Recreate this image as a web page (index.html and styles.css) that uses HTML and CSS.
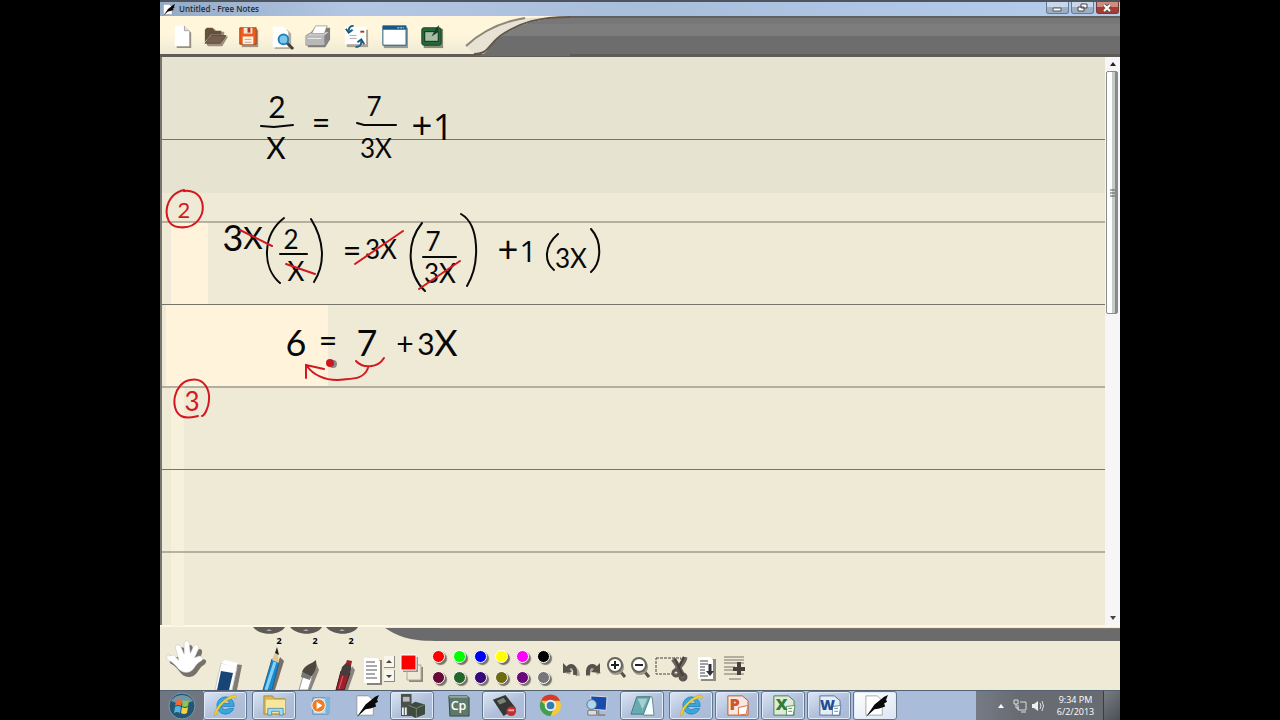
FILE: index.html
```
<!DOCTYPE html>
<html lang="en">
<head>
<meta charset="utf-8">
<title>Untitled - Free Notes</title>
<link rel="stylesheet" href="styles.css">
</head>
<body>
<svg class="defs" width="0" height="0" aria-hidden="true">
  <defs>
    <symbol id="quill" viewBox="0 0 26 26"><path d="M3 3h12l5 5v15H3z" fill="#fff" stroke="#777" stroke-width=".6"/><path d="M3 25L12 12 22 4 26 2 24 7 25 9 22 11 23 14 17 16 12 17z" fill="#090909"/></symbol>
    <symbol id="ie" viewBox="0 0 26 26"><path d="M13 4a9 9 0 1 0 8.500 12h-5.500a4 4 0 0 1-7-2h13A9 9 0 0 0 13 4zM9 11a4 4 0 0 1 8 0z" fill="#35a9df" fill-rule="evenodd" stroke="#1875b7" stroke-width=".7"/><path d="M2 24C-1 19 11 4 22 2c4 0 2 4 1 5 0-2-1-3-4-1C10 9 5 17 4 22z" fill="#f2cf35" stroke="#a9912b" stroke-width=".4"/></symbol>
    <linearGradient id="steel" gradientUnits="userSpaceOnUse" x1="0" y1="16" x2="0" y2="56"><stop offset=".2" stop-color="#777"/><stop offset=".2" stop-color="#7d7d7d"/><stop offset=".5" stop-color="#7d7d7d"/><stop offset=".5" stop-color="#6d6d6d"/></linearGradient>
  </defs>
</svg>
<div class="window">
  <header class="titlebar">
    <svg class="app-icon" viewBox="0 0 26 26" aria-hidden="true"><use href="#quill"/></svg>
    <h1 class="title">Untitled - Free Notes</h1>
    <div class="controls">
      <button class="control" aria-label="Minimize"><svg width="20" height="12"><path d="M6 6h8v3H6z" fill="#fff" stroke="#555"/></svg></button>
      <button class="control" aria-label="Restore"><svg width="20" height="12"><path d="M9 2h6v4H9zM6 5h6v4H6z" fill="#fff" stroke="#444"/></svg></button>
      <button class="control control-close" aria-label="Close"><svg width="20" height="12"><path d="M7 3l6 6M13 3l-6 6" stroke="#654" stroke-width="4"/><path d="M7 3l6 6M13 3l-6 6" stroke="#fff" stroke-width="2"/></svg></button>
    </div>
  </header>

  <nav class="toolbar" aria-label="File">
    <div class="file-tools">
      <button class="file-tool" aria-label="New"><svg viewBox="0 0 30 30"><path d="M9 6h10l5 5v16H9z" fill="#968f82"/><path d="M7 4h10l5 5v16H7z" fill="#fff"/><path d="M17 4v5h5" fill="#ddd" stroke="#888" stroke-width=".7"/></svg></button>
      <button class="file-tool" aria-label="Open"><svg viewBox="0 0 30 30"><path d="M6 24V9l2-2h6l2 3h8v5h4l-6 10H8z" fill="#9e8f7c"/><path d="M4 21V8l2-2h6l2 3h7v4H10z" fill="#65503e"/><path d="M4 22l7-8h15l-6 8z" fill="#756050" stroke="#4e3b2e" stroke-width=".7"/></svg></button>
      <button class="file-tool" aria-label="Save"><svg viewBox="0 0 30 30"><path d="M8 8h17v18H8z" fill="#a29180"/><path d="M6 6h17v17H6z" fill="#ee5c19" stroke="#9c461b"/><path d="M10 6h9v6h-9z" fill="#f5e7dc"/><path d="M14 6h3v5h-3z" fill="#aa3b13"/><path d="M9 15h11v8H9z" fill="#fff2e1"/><path d="M11 18h7M11 21h7" stroke="#c4a389"/></svg></button>
      <button class="file-tool" aria-label="Print preview"><svg viewBox="0 0 30 30"><path d="M8 8h13l4 4v16H8z" fill="#b5ad9d"/><path d="M6 5h11l5 5v16H6z" fill="#fff"/><circle cx="17" cy="18" r="5" fill="#79c9ef" stroke="#267fb1" stroke-width="2"/><path d="M21 22l6 6" stroke="#46413b" stroke-width="3"/></svg></button>
      <button class="file-tool file-tool-wide" aria-label="Print"><svg viewBox="0 0 30 30"><path d="M5 15l7-9h16v12l-5 8H5z" fill="#817d77"/><path d="M3 14l7-4h17v8l-5 6H3z" fill="#ccc" stroke="#777" stroke-width=".7"/><path d="M9 12l4-8h12l-3 8z" fill="#fff" stroke="#888" stroke-width=".7"/><path d="M3 14h19v9H3z" fill="#b8b8b8"/><path d="M22 14l5-4v8l-5 5z" fill="#838383"/><path d="M5 17h14" stroke="#eee"/></svg></button>
      <button class="file-tool file-tool-wide" aria-label="Send"><svg viewBox="0 0 30 30"><path d="M6 8h22v18H6z" fill="#aaa295"/><path d="M4 5h22v18H4z" fill="#fff"/><path d="M9 14h7M9 17h7" stroke="#aaa"/><path d="M20 9h4v2h-4z" fill="#a33b28"/><path d="M13 4c-4 0-5 2-5 5M5 7l3 4 4-3" fill="none" stroke="#185b86" stroke-width="2"/><path d="M15 26c5 0 6-2 6-6M17 21l4-3 3 5" fill="none" stroke="#185b86" stroke-width="2"/></svg></button>
      <button class="file-tool file-tool-wide" aria-label="Window view"><svg viewBox="0 0 30 30"><path d="M5 6h25v21H5z" fill="#999"/><path d="M4 4h24v20H4z" fill="#fff" stroke="#175984"/><path d="M4 4h24v4H4z" fill="#175984"/><path d="M19 6h7" stroke="#d6edfb" stroke-dasharray="2 1"/></svg></button>
      <button class="file-tool file-tool-wide" aria-label="Board"><svg viewBox="0 0 30 30"><path d="M7 7h20v20H7z" fill="#8c8c76"/><rect x="5" y="6" width="20" height="18" rx="2" fill="#23693a" stroke="#183f27"/><path d="M8 10h14v10H8z" fill="#a9bda4" stroke="#092f15"/><path d="M15 15l5-9 3-3-2 8z" fill="#183f26"/></svg></button>
    </div>
    <svg class="swoosh" viewBox="460 16 110 40" aria-hidden="true"><path d="M466 46C480 33 500 22 525 18L560 17C530 20 510 28 494 40 486 48 486 53 474 54Z" fill="#e6e2d4"/><path d="M474 56C492 54 482 50 500 37 520 23 540 18 570 17V56Z" fill="url(#steel)"/><path d="M474 54C490 53 486 47 500 36 520 22 540 17 570 17" fill="none" stroke="#615649" stroke-width="2"/><path d="M466 46C480 33 500 22 525 18" fill="none" stroke="#8c857a" stroke-width="2"/></svg>
    <div class="toolbar-rest"></div>
  </nav>

  <main class="notes">
    <div class="page">
      <svg class="ink" viewBox="160 56 960 570" preserveAspectRatio="xMinYMin" role="img" aria-label="Solving two over x equals seven over three x plus one">
        <rect class="wash" x="171" y="222" width="37" height="82"/><rect class="wash" x="166" y="304" width="162" height="82"/><rect class="wash wash-soft" x="171" y="387" width="13" height="239"/>
        <path class="rule" d="M162 139.500H1106M162 222H1106M162 304.500H1106M162 387H1106M162 469.500H1106M162 552H1106"/>
        <g class="hand">
          <text x="277" y="118" class="h-mid">2</text><text x="276" y="159" class="h-mid">X</text><text x="321" y="134" class="h-sign">=</text>
          <text x="374" y="116">7</text><text x="376" y="158">3X</text><text x="422" y="138" class="h-big">+</text><text x="443" y="140" class="h-big h-one">1</text>
          <text x="233" y="251" class="h-big">3</text><text x="253" y="249" class="h-mid">X</text><text x="291" y="249">2</text><text x="296" y="281">X</text>
          <text x="352" y="262" class="h-sign">=</text><text x="381" y="259">3X</text><text x="433" y="251">7</text><text x="440" y="283">3X</text>
          <text x="508" y="262" class="h-big">+</text><text x="528" y="262" class="h-mid h-one">1</text><text x="571" y="268">3X</text>
          <text x="296" y="356" class="h-big">6</text><text x="328" y="352" class="h-sign">=</text><text x="367" y="356" class="h-big">7</text><text x="405" y="355" class="h-mid">+</text><text x="426" y="355" class="h-mid">3</text><text x="446" y="356" class="h-big">X</text>
        </g>
        <g class="stroke">
          <path d="M261 126l13 1 19-2M357 123l7 2h32M280 254h27M423 257h33"/>
          <path d="M284 218C262 235 262 268 280 283M311 219C324 240 326 263 314 282M422 223C405 244 408 275 425 291M461 214C480 225 480 264 467 286M558 234C544 246 544 262 554 270M591 229C602 241 602 262 591 272"/>
        </g>
        <g class="stroke red">
          <path d="M184 190C163 194 161 225 178 227 198 230 205 213 202 202 199 192 190 190 184 191M190 380C174 383 169 408 181 416 187 419 193 417 198 416M190 380C204 377 212 390 208 406 206 412 205 415 202 416"/>
          <path d="M240 230L272 246M286 264L315 274M355 264L403 231M419 289L460 261M356 361C363 369 378 368 384 358M368 368C363 381 350 378 337 380 325 380 313 375 307 366M324 369L306 365V378"/>
        </g>
        <g class="hand hand-red"><text x="184" y="218">2</text><text x="192" y="411" class="h-three">3</text></g>
        <circle cx="333" cy="364" r="4" fill="#888"/><circle cx="330" cy="363" r="4" fill="#c91920"/>
      </svg>
    </div>
    <div class="scroll">
      <button class="scroll-button" aria-label="Scroll up"><svg width="8" height="8"><path d="M1 6l3-4 3 4z" fill="#222"/></svg></button>
      <div class="scroll-track"><div class="scroll-thumb"><svg width="7" height="8" aria-hidden="true"><path d="M1 1h5M1 4h5M1 7h5" stroke="#555"/></svg></div></div>
      <button class="scroll-button" aria-label="Scroll down"><svg width="8" height="8"><path d="M1 2l3 4 3-4z" fill="#444"/></svg></button>
    </div>
  </main>

  <footer class="drawing">
    <div class="band" aria-hidden="true">
      <svg class="handles" viewBox="0 0 225 14"><g fill="#5d5a55"><path d="M93 0h32c-5 9-25 9-32 0zM130 0h32c-5 9-25 9-32 0zM166 0h32c-5 9-25 9-32 0z"/></g><path d="M106 4l3-2 3 2zM143 4l3-2 3 2zM179 4l3-2 3 2z" fill="#aaa"/></svg>
      <svg class="curve" viewBox="0 0 55 14"><path d="M0 1H55V14C26 14 16 11 0 1z" fill="#6b6b6b"/></svg>
      <div class="band-rest"></div>
    </div>
    <div class="tools">
      <button class="tool hand-tool" aria-label="Hand"><svg width="44" height="49" viewBox="-2 0 50 56"><path d="M7 17l5-1 6 7-4-15c0-4 5-4 7 1l2 8V6c1-5 6-4 6 1l1 9 4-7c3-4 7-1 5 4l-4 9 5-3c4-1 6 3 2 6-8 4-7 14-18 14-10 0-9-9-20-15-3-2-1-6 3-7z" transform="translate(3 2)" fill="#77716a"/><path d="M5 17l5-1 6 6-4-14c0-5 5-5 7 0l3 7V3c1-5 6-4 6 1l1 10 4-8c3-4 7-1 5 4l-4 9 5-2c4 0 6 4 2 6-8 4-7 13-17 13-10-1-9-9-20-14-3-2-2-6 1-7z" fill="#fff" stroke="#bbb" stroke-width=".5"/></svg></button>
      <button class="tool eraser-tool" aria-label="Eraser"><svg width="42" height="49"><path d="M14 49l7-27 14 2-5 25z" fill="#817b72"/><path d="M8 49l6-27 16 4-5 23z" fill="#fff" stroke="#ccc"/><path d="M10 49l4-19 12 2-4 17z" fill="#164576"/><path d="M14 22l4-3 13 3-2 5z" fill="#fff"/></svg></button>
      <button class="tool pen pen-first" aria-label="Pencil, size 2"><svg width="36" height="49"><text x="26" y="3">2</text><path d="M16 49l11-33 4 4-9 29z" fill="#77716a"/><path d="M10 49l9-31 7 3-7 28z" fill="#1689cf" stroke="#1d638e"/><path d="M13 49l9-28" stroke="#86d1f8" stroke-width="3"/><path d="M19 19l5-12 2 15z" fill="#e4c795"/><path d="M22 12l2-6 2 8z" fill="#222"/></svg></button>
      <button class="tool pen" aria-label="Brush, size 2"><svg width="36" height="49"><text x="25" y="3">2</text><path d="M18 49l8-27 3 7-8 20z" fill="#8a847c"/><path d="M12 31C15 23 22 23 26 19c1 8-1 12-5 17z" fill="#4c4840"/><path d="M9 49l4-14 9 2-4 12z" fill="#fff" stroke="#999"/><path d="M12 31l9 4-1 4-9-3z" fill="#777"/></svg></button>
      <button class="tool pen" aria-label="Marker, size 2"><svg width="36" height="49"><text x="25" y="3">2</text><path d="M18 49l8-24 3 4-7 20z" fill="#8a847c"/><path d="M10 49l5-19 9 2-6 17z" fill="#9f1e2a" stroke="#4f141a"/><path d="M13 48l5-17" stroke="#d56970"/><path d="M14 34l2-8 4-4h5v7l-3 7z" fill="#443d3c"/><path d="M20 22l1-3 5 1-1 5z" fill="#9f1e2a"/></svg></button>
      <button class="tool paper" aria-label="Paper style"><svg width="22" height="49"><path d="M5 19h15v25H5z" fill="#89847b"/><path d="M2 17h13l3 3v22H2z" fill="#fff"/><path d="M4 21h9M4 25h11M4 29h11M4 33h9M4 37h11" stroke="#555"/></svg></button>
      <div class="spinner"><button aria-label="Previous paper"><svg width="10" height="10"><path d="M2 6l3-3 3 3z" fill="#444"/></svg></button><button aria-label="Next paper"><svg width="10" height="10"><path d="M2 4l3 3 3-3z" fill="#444"/></svg></button></div>
      <button class="tool swatch" aria-label="Current colors"><svg width="34" height="49"><path d="M13 26h14v15H13z" fill="#8d887e"/><path d="M11 24h14v15H11z" fill="#efead6" stroke="#aaa79e"/><path d="M7 16h15v15H7z" fill="#99948a"/><path d="M5 14h15v15H5z" fill="#f00" stroke="#fff"/></svg></button>
      <div class="palette" role="group" aria-label="Palette">
        <button class="c-red" aria-label="Red"></button><button class="c-green" aria-label="Green"></button><button class="c-blue" aria-label="Blue"></button><button class="c-yellow" aria-label="Yellow"></button><button class="c-pink" aria-label="Magenta"></button><button class="c-black" aria-label="Black"></button>
        <button class="c-maroon" aria-label="Maroon"></button><button class="c-forest" aria-label="Dark green"></button><button class="c-indigo" aria-label="Indigo"></button><button class="c-olive" aria-label="Olive"></button><button class="c-purple" aria-label="Purple"></button><button class="c-gray" aria-label="Gray"></button>
      </div>
      <button class="tool undo" aria-label="Undo"><svg width="20" height="49"><path d="M6 33c2-8 9-8 10 2" fill="none" stroke="#aaa69a" stroke-width="4"/><path d="M5 29c2-6 9-6 8 5" fill="none" stroke="#55524c" stroke-width="4"/><path d="M1 22v10l9-1z" fill="#55524c"/></svg></button>
      <button class="tool undo" aria-label="Redo"><svg width="20" height="49"><path d="M5 35c1-10 8-10 11-2" fill="none" stroke="#aaa69a" stroke-width="4"/><path d="M5 34c-1-11 6-11 9-5" fill="none" stroke="#55524c" stroke-width="4"/><path d="M17 22v10l-9-1z" fill="#55524c"/></svg></button>
      <button class="tool zoom" aria-label="Zoom in"><svg width="24" height="49"><path d="M16 30l5 6" stroke="#56524b" stroke-width="3"/><circle cx="12" cy="26" r="7" fill="none" stroke="#9b978c" stroke-width="2"/><circle cx="11" cy="24" r="7" fill="#fff" stroke="#68635b" stroke-width="2"/><path d="M7 24h8M11 20v8" stroke="#222" stroke-width="2"/></svg></button>
      <button class="tool zoom" aria-label="Zoom out"><svg width="24" height="49"><path d="M16 30l5 6" stroke="#56524b" stroke-width="3"/><circle cx="12" cy="26" r="7" fill="none" stroke="#9b978c" stroke-width="2"/><circle cx="11" cy="24" r="7" fill="#fff" stroke="#68635b" stroke-width="2"/><path d="M7 24h8" stroke="#222" stroke-width="2"/></svg></button>
      <button class="tool cut" aria-label="Cut selection"><svg width="44" height="49"><path d="M4 17h25v16H4z" fill="none" stroke="#444" stroke-dasharray="3 1"/><path d="M21 18c4 4 7 12 12 20M33 16c-1 6-5 9-9 13" fill="none" stroke="#6b665d" stroke-width="5"/><circle cx="24" cy="32" r="3" fill="none" stroke="#5b5750" stroke-width="3"/><circle cx="31" cy="36" r="3" fill="none" stroke="#5b5750" stroke-width="3"/><path d="M23 18l8 17M32 16l-6 12" stroke="#45423d" stroke-width="2"/></svg></button>
      <button class="tool insert" aria-label="Insert page"><svg width="26" height="49"><path d="M6 18h15v22H6z" fill="#8f8a80"/><path d="M3 16h12l3 3v19H3z" fill="#fff"/><path d="M5 20h8M5 23h8M5 26h5M5 29h5M5 32h5M5 35h8" stroke="#444"/><path d="M15 23v9" stroke="#333" stroke-width="3"/><path d="M11 30h8l-4 5z" fill="#333"/></svg></button>
      <button class="tool insert" aria-label="Add space"><svg width="28" height="49"><path d="M3 16h20M3 19h20M3 22h20M3 26h11M3 29h11M3 33h20M8 38h12" stroke="#77736a"/><path d="M18 21v13M12 28h12" stroke="#45423d" stroke-width="4"/></svg></button>
    </div>
  </footer>

  <nav class="taskbar" aria-label="Taskbar">
    <button class="start" aria-label="Start"><svg viewBox="0 0 28 28"><circle cx="14" cy="14" r="13" fill="#245774" stroke="#8197a5"/><path d="M3 9a13 13 0 0 1 22 0q-11 5-22 0z" fill="#7394a5"/><path d="M8 9q3-3 6-1l-1 6q-3-2-6 0z" fill="#ed6a32"/><path d="M15 8q3 2 6 0l-1 6q-3 2-6 0z" fill="#8bc54d"/><path d="M7 15q3-2 6 0l-1 6q-3-2-6 0z" fill="#4ab5e6"/><path d="M14 15q3 2 6 0l-1 6q-3 2-6 0z" fill="#f7cf43"/></svg></button>
    <div class="tasks">
      <button class="task open spaced" aria-label="Internet Explorer"><svg viewBox="0 0 26 26"><use href="#ie"/></svg></button>
      <button class="task open" aria-label="Explorer"><svg viewBox="0 0 26 26"><path d="M2 3h9l2 3h11v16H2z" fill="#d7b857" stroke="#a78d42"/><path d="M4 7h20v14H4z" fill="#f8e69a"/><path d="M6 16h16v7h-4v-4h-8v4H6z" fill="#a6d8ef" stroke="#5696b8"/></svg></button>
      <button class="task" aria-label="Media Player"><svg viewBox="0 0 26 26"><path d="M5 5h16v17H5z" fill="#bcdced" stroke="#5888b0"/><path d="M18 4h5v17h-5z" fill="#78b6dc"/><circle cx="11" cy="13" r="7" fill="#ef7b25" stroke="#fff"/><path d="M9 9l6 4-6 4z" fill="#fff"/></svg></button>
      <button class="task" aria-label="Free Notes"><svg viewBox="0 0 26 26"><use href="#quill"/></svg></button>
      <button class="task open" aria-label="Tools"><svg viewBox="0 0 26 26"><path d="M1 1h11v23H1z" fill="#4b504c"/><path d="M3 4h7v5H3z" fill="#bbb"/><path d="M3 15v8M6 15v8" stroke="#eee" stroke-width="2"/><path d="M9 13l7-4 10 3v10l-10 4-7-4z" fill="#3d4b3e"/><path d="M9 13l8 3 9-4M17 16v10" stroke="#79877a" fill="none"/></svg></button>
      <button class="task" aria-label="Captivate"><svg viewBox="0 0 26 26"><path d="M3 3h19l2 2v19H4z" fill="#5e796a" stroke="#314d3c"/><path d="M3 3h19l1 2H4z" fill="#91a99b"/><text x="13" y="18" class="cp">Cp</text></svg></button>
      <button class="task open" aria-label="Recorder"><svg viewBox="0 0 26 26"><path d="M1 7l13-5 11 14-13 8z" fill="#353735"/><path d="M5 8l7-3 3 4-7 3z" fill="#778574"/><circle cx="20" cy="19" r="5" fill="#c42d2d"/><path d="M17 18h6" stroke="#ecaaa0" stroke-width="2"/></svg></button>
      <button class="task" aria-label="Chrome"><svg viewBox="0 0 26 26"><circle cx="13" cy="13" r="11" fill="#f6ca36"/><path d="M3 8a11 11 0 0 1 20 0H13z" fill="#d53b2b"/><path d="M3 8a11 11 0 0 0 10 16l4-9-8-1z" fill="#41a050"/><circle cx="13" cy="13" r="5" fill="#377bb5" stroke="#e8edf0" stroke-width="2"/></svg></button>
      <button class="task" aria-label="Remote Desktop"><svg viewBox="0 0 26 26"><path d="M7 3l17 1-1 14-15-1z" fill="#174cae" stroke="#ddd"/><path d="M15 18v5h7" fill="none" stroke="#888" stroke-width="2"/><circle cx="8" cy="12" r="5" fill="#aed6ed" stroke="#56728a"/><path d="M4 18h9v5H4z" fill="#ddd" stroke="#777"/></svg></button>
      <button class="task open spaced" aria-label="Notepad"><svg viewBox="0 0 26 26"><path d="M9 4h14l2 19H14z" fill="#f4ffff" stroke="#698385"/><path d="M7 4h14l-7 18H1z" fill="#67aab0" stroke="#477c82"/><path d="M8 6h10l-5 11z" fill="#aacfd0"/></svg></button>
      <button class="task open" aria-label="Internet Explorer window"><svg viewBox="0 0 26 26"><use href="#ie"/></svg></button>
      <button class="task open" aria-label="PowerPoint"><svg viewBox="0 0 26 26"><path d="M3 3h15l6 5v15H3z" fill="#f4e8df" stroke="#bd5634"/><path d="M14 15l10-2-2 9-8 1z" fill="#fff" stroke="#d96b43"/><text x="10" y="18" class="office office-p">P</text></svg></button>
      <button class="task open" aria-label="Excel"><svg viewBox="0 0 26 26"><path d="M3 3h15l6 5v15H3z" fill="#dfead7" stroke="#49804c"/><path d="M16 14l9-1-2 10h-7z" fill="#fff" stroke="#589256"/><path d="M18 16h4M18 19h4" stroke="#568b58"/><text x="11" y="18" class="office office-x">X</text></svg></button>
      <button class="task open" aria-label="Word"><svg viewBox="0 0 26 26"><path d="M3 3h15l6 5v15H3z" fill="#e6edf3" stroke="#50769c"/><path d="M16 14l9-1-2 10h-7z" fill="#fff" stroke="#6480a7"/><path d="M18 16h4M18 19h4" stroke="#6685aa"/><text x="11" y="18" class="office office-w">W</text></svg></button>
      <button class="task open active" aria-label="Free Notes window"><svg viewBox="0 0 26 26"><use href="#quill"/></svg></button>
    </div>
    <div class="tray">
      <svg class="tray-icons" viewBox="0 0 48 20" aria-hidden="true"><path d="M2 12l3-4 3 4z" fill="#fff"/><path d="M24 6h6v8h-8V9M25 16h5M18 4h4v4h-4zM20 8v4h3" fill="none" stroke="#ddd"/><path d="M36 8h2l4-3v10l-4-3h-2z" fill="#eee"/><path d="M44 7q2 3 0 6M46 5q3 5 0 10" fill="none" stroke="#ddd"/></svg>
      <div class="clock"><time>9:34 PM</time><span>6/2/2013</span></div>
      <button class="desktop" aria-label="Show desktop"></button>
    </div>
  </nav>
</div>
</body>
</html>
```
FILE: styles.css
```
* { box-sizing: border-box; }
body { margin: 0; background: #000; font-family: "Open Sans", "Noto Sans", sans-serif; }
button { margin: 0; padding: 0; border: 0; background: none; font: inherit; }
svg { display: block; overflow: visible; }
.defs { position: absolute; }
.window { display: flex; flex-direction: column; width: 75%; min-height: 100vh; margin: 0 auto; background: #efead5; overflow: hidden; }

.titlebar { display: flex; align-items: center; height: 16px; padding-left: 2px; border-top: 2px solid #4d545e; background: linear-gradient(90deg, #93a9c4, #b3c7e4 20%, #a9bedb 50%, #b5cdec); }
.app-icon { width: 13px; height: 13px; }
.title { flex: 1; margin: 0 0 0 4px; font-size: 8px; line-height: 12px; font-weight: 600; color: #252b35; }
.controls { display: flex; gap: 2px; align-self: flex-start; padding-right: 1px; }
.control { width: 23px; height: 12px; border: 1px solid #697b93; border-top: 0; border-radius: 0 0 3px 3px; background: linear-gradient(#c8d8ea 50%, #9cafc7 50%); }
.control-close { background: linear-gradient(#cf8c82 45%, #a73c30 45%); border-color: #743c39; }

.toolbar { display: flex; height: 41px; border-bottom: 3px solid #5f5b57; background: linear-gradient(#fff6dc 50%, #eeead5); }
.file-tools { display: flex; align-items: center; padding: 2px 0 0 6px; width: 300px; }
.file-tool { flex: none; display: flex; justify-content: center; width: 33px; }
.file-tool-wide { width: 38px; }
.file-tool svg { width: 29px; height: 29px; }
.swoosh { width: 110px; height: 40px; flex: none; }
.toolbar-rest { flex: 1; border-top: 2px solid #615f5c; background: linear-gradient(#777 6px, #7d7d7d 6px 18px, #6d6d6d 18px); }

.notes { flex: 1; display: flex; min-height: 0; border-left: 2px solid #777570; }
.page { position: relative; flex: 1; background: linear-gradient(#e6e4d0 136px, #efead5 136px); }
.ink { position: absolute; left: -2px; top: -1px; width: 960px; height: 570px; }
.wash { fill: #fff4db; }
.wash-soft { fill: #f7f0da; }
.rule { stroke: #77746a; stroke-width: 1; }
.hand { font-family: Lato, "Open Sans", sans-serif; font-size: 26px; fill: #080808; text-anchor: middle; }
.h-mid { font-size: 30px; }
.h-big { font-size: 36px; }
.h-sign { font-size: 32px; }
.h-three { font-size: 26px; }
.h-one { font-family: "Open Sans", sans-serif; }
.hand-red { font-size: 22px; fill: #d41820; }
.stroke { fill: none; stroke: #080808; stroke-width: 2; stroke-linecap: round; }
.red { stroke: #d41820; }
.scroll { position: relative; display: flex; flex-direction: column; width: 15px; background: #f6f5f8; }
.scroll-button { display: flex; align-items: center; justify-content: center; width: 15px; height: 14px; }
.scroll-track { flex: 1; }
.scroll-thumb { display: flex; align-items: center; justify-content: center; width: 12px; height: 45%; margin-left: 1px; border: 1px solid #888c8d; border-radius: 2px; background: linear-gradient(90deg, #fff 45%, #c5cbcb 45% 75%, #858b8b 75%); }

.drawing { background: #efead5; border-top: 2px solid #fff8e5; }
.band { display: flex; height: 14px; }
.handles { width: 225px; height: 14px; flex: none; }
.curve { width: 55px; height: 14px; flex: none; }
.band-rest { flex: 1; margin-top: 1px; background: #6b6b6b; border-top: 1px solid #7b7972; }
.tools { display: flex; height: 49px; padding-left: 3px; }
.tool { flex: none; display: block; }
.hand-tool { width: 44px; }
.eraser-tool { width: 46px; }
.pen { width: 36px; font-size: 9px; font-weight: 700; }
.pen-first { width: 37px; }
.pen text { text-anchor: middle; }
.paper { width: 22px; }
.spinner { display: flex; flex-direction: column; gap: 2px; width: 12px; padding-top: 15px; }
.spinner button { width: 11px; height: 12px; background: #f8f5ea; border-right: 1px solid #888; border-bottom: 1px solid #888; }
.swatch { width: 36px; }
.palette { display: grid; grid-template-columns: repeat(6, 21px); grid-auto-rows: 21px; align-content: start; padding-top: 9px; width: 130px; }
.palette button { width: 13px; height: 13px; border: 1px solid #fff; border-radius: 50%; box-shadow: 2px 2px 1px #77726a; }
.c-red { background: #f00; } .c-green { background: #0f0; } .c-blue { background: #00f; }
.c-yellow { background: #ff0; } .c-pink { background: #f0f; } .c-black { background: #000; }
.c-maroon { background: #650b36; } .c-forest { background: #216727; } .c-indigo { background: #350a74; }
.c-olive { background: #6e6b0d; } .c-purple { background: #6b0878; } .c-gray { background: #777; }
.undo { width: 21px; }
.zoom { width: 24px; }
.cut { width: 43px; }
.insert { width: 26px; }

.taskbar { display: flex; height: 30px; border-top: 1px solid #536273; background: #a9bcda; }
.start { display: flex; justify-content: center; align-items: center; width: 43px; background: #707681; }
.start svg { width: 28px; height: 28px; }
.tasks { flex: 1; display: flex; gap: 2px; }
.task { display: flex; justify-content: center; align-items: center; width: 44px; height: 29px; border: 1px solid transparent; border-radius: 3px; }
.task svg { width: 25px; height: 25px; }
.open { border-color: #65758a; box-shadow: inset 0 0 0 1px #e0eafa; background: linear-gradient(150deg, #dce6f4, #b0c0da 55%, #a9bad4); }
.active { background: linear-gradient(150deg, #fff, #dbe5f2); }
.spaced { margin-right: 3px; }
.cp { font-size: 13px; font-weight: 600; fill: #fff; text-anchor: middle; }
.office { font-size: 17px; font-weight: 800; text-anchor: middle; }
.office-p { fill: #cf5429; }
.office-x { fill: #2f7d3a; }
.office-w { fill: #1f4f94; font-size: 15px; }
.tray { display: flex; align-items: center; width: 144px; background: linear-gradient(90deg, #757b86, #686b71 30%); }
.tray-icons { width: 48px; height: 20px; margin-left: 20px; }
.clock { display: flex; flex-direction: column; flex: 1; align-items: center; padding-left: 4px; color: #fff; font-size: 9px; line-height: 12px; }
.desktop { width: 17px; height: 29px; border-left: 1px solid #383d43; background: linear-gradient(135deg, #777d83, #4a5057); }
```
